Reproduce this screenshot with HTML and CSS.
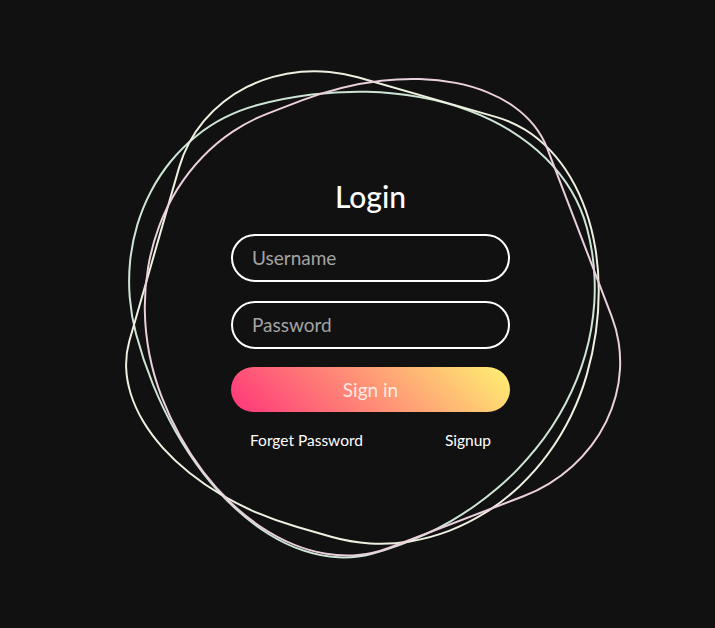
FILE: index.html
```html
<!DOCTYPE html>
<html lang="en">
<head>
<meta charset="utf-8">
<title>Login</title>
<link rel="stylesheet" href="styles.css">
</head>
<body>
  <div class="ring">
    <i class="ring-line ring-green"></i>
    <i class="ring-line ring-cream"></i>
    <i class="ring-line ring-pink"></i>
    <form class="login">
      <h2 class="title">Login</h2>
      <input class="field" type="text" placeholder="Username">
      <input class="field" type="password" placeholder="Password">
      <button class="submit" type="button">Sign in</button>
      <div class="links">
        <a href="#" class="link">Forget Password</a>
        <a href="#" class="link">Signup</a>
      </div>
    </form>
  </div>
</body>
</html>
```

FILE: styles.css
```css
* {
  margin: 0;
  padding: 0;
  box-sizing: border-box;
  font-family: "Lato", "Noto Sans", sans-serif;
}

html {
  background: #111111;
}

body {
  height: 628px;
  display: flex;
  justify-content: center;
  align-items: center;
  padding: 0 0 0 26px;
  background: #111111;
  overflow: hidden;
}

.ring {
  position: relative;
  width: 465px;
  height: 465px;
  flex: none;
  display: flex;
  justify-content: center;
  align-items: center;
}

.ring-line {
  position: absolute;
  inset: 0;
  border: 2px solid #ffffff;
}

.ring-green {
  border-color: #cde5d5;
  border-radius: 38% 62% 63% 37% / 41% 44% 56% 59%;
  transform: rotate(-15deg);
}

.ring-cream {
  inset: 7px;
  border-color: #eef0e0;
  border-radius: 41% 44% 56% 59% / 38% 62% 63% 37%;
  transform: rotate(16deg);
}

.ring-pink {
  inset: 7px;
  border-color: #eacfdc;
  border-radius: 41% 44% 56% 59% / 38% 62% 63% 37%;
  transform: rotate(159deg);
}

.login {
  position: relative;
  width: 279px;
  display: flex;
  flex-direction: column;
  align-items: center;
  gap: 18.6px;
}

.title {
  font-size: 30px;
  line-height: 37px;
  font-weight: 500;
  color: #ffffff;
}

.field {
  width: 100%;
  height: 48px;
  padding: 0 19px;
  background: transparent;
  border: 2px solid #ffffff;
  border-radius: 40px;
  font-size: 19px;
  color: #ffffff;
  outline: none;
}

.field::placeholder {
  color: #a3a3a3;
  opacity: 1;
}

.submit {
  width: 100%;
  height: 45px;
  border: none;
  border-radius: 40px;
  background: linear-gradient(45deg, #ff357a, #fff172);
  font-size: 19px;
  color: rgba(255, 255, 255, 0.82);
  cursor: pointer;
}

.links {
  width: 100%;
  display: flex;
  justify-content: space-between;
  align-items: center;
  padding: 0 19px;
}

.link {
  font-size: 15.5px;
  line-height: 19px;
  color: #ffffff;
  text-decoration: none;
}
```
